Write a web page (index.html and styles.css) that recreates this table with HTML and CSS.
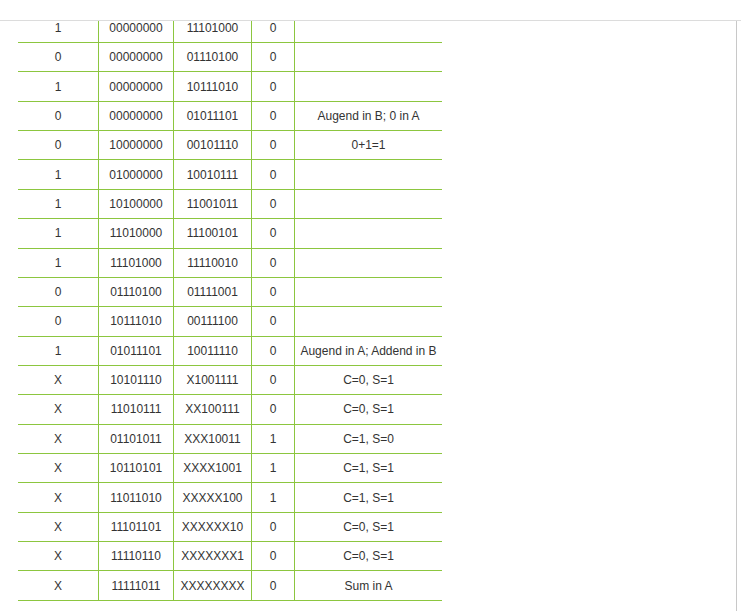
FILE: index.html
```html
<!DOCTYPE html>
<html>
<head>
<meta charset="utf-8">
<link rel="stylesheet" href="styles.css">
</head>
<body>
<div class="top"></div>
<div class="frame">
  <table class="steps">
    <colgroup>
      <col class="c1"><col class="c2"><col class="c3"><col class="c4"><col class="c5">
    </colgroup>
    <tbody>
      <tr><td>1</td><td>00000000</td><td>11101000</td><td>0</td><td></td></tr>
      <tr><td>0</td><td>00000000</td><td>01110100</td><td>0</td><td></td></tr>
      <tr><td>1</td><td>00000000</td><td>10111010</td><td>0</td><td></td></tr>
      <tr><td>0</td><td>00000000</td><td>01011101</td><td>0</td><td>Augend in B; 0 in A</td></tr>
      <tr><td>0</td><td>10000000</td><td>00101110</td><td>0</td><td>0+1=1</td></tr>
      <tr><td>1</td><td>01000000</td><td>10010111</td><td>0</td><td></td></tr>
      <tr><td>1</td><td>10100000</td><td>11001011</td><td>0</td><td></td></tr>
      <tr><td>1</td><td>11010000</td><td>11100101</td><td>0</td><td></td></tr>
      <tr><td>1</td><td>11101000</td><td>11110010</td><td>0</td><td></td></tr>
      <tr><td>0</td><td>01110100</td><td>01111001</td><td>0</td><td></td></tr>
      <tr><td>0</td><td>10111010</td><td>00111100</td><td>0</td><td></td></tr>
      <tr><td>1</td><td>01011101</td><td>10011110</td><td>0</td><td>Augend in A; Addend in B</td></tr>
      <tr><td>X</td><td>10101110</td><td>X1001111</td><td>0</td><td>C=0, S=1</td></tr>
      <tr><td>X</td><td>11010111</td><td>XX100111</td><td>0</td><td>C=0, S=1</td></tr>
      <tr><td>X</td><td>01101011</td><td>XXX10011</td><td>1</td><td>C=1, S=0</td></tr>
      <tr><td>X</td><td>10110101</td><td>XXXX1001</td><td>1</td><td>C=1, S=1</td></tr>
      <tr><td>X</td><td>11011010</td><td>XXXXX100</td><td>1</td><td>C=1, S=1</td></tr>
      <tr><td>X</td><td>11101101</td><td>XXXXXX10</td><td>0</td><td>C=0, S=1</td></tr>
      <tr><td>X</td><td>11110110</td><td>XXXXXXX1</td><td>0</td><td>C=0, S=1</td></tr>
      <tr><td>X</td><td>11111011</td><td>XXXXXXXX</td><td>0</td><td>Sum in A</td></tr>
    </tbody>
  </table>
</div>
</body>
</html>
```

FILE: styles.css
```css
html, body {
  margin: 0;
  padding: 0;
  background: #fff;
}

body {
  font-family: "Liberation Sans", Arial, sans-serif;
  font-size: 12px;
  color: #333;
  overflow: hidden;
}

.top {
  height: 20px;
  border-bottom: 1px solid #dcdcdc;
}

.frame {
  width: 736px;
  height: 590px;
  border-right: 1px solid #c8c8c8;
  overflow: hidden;
}

.steps {
  margin: -7.37px 0 0 18px;
  border-collapse: separate;
  border-spacing: 0;
  table-layout: fixed;
  width: 424px;
}

.c1 { width: 81px; }
.c2 { width: 75px; }
.c3 { width: 78px; }
.c4 { width: 43px; }
.c5 { width: 147px; }

.steps td {
  box-sizing: border-box;
  height: 29.37px;
  padding: 0;
  text-align: center;
  vertical-align: middle;
  border-bottom: 1px solid #8cc63f;
  white-space: nowrap;
}

.steps td:not(:last-child) {
  border-right: 1px solid #8cc63f;
}
```
